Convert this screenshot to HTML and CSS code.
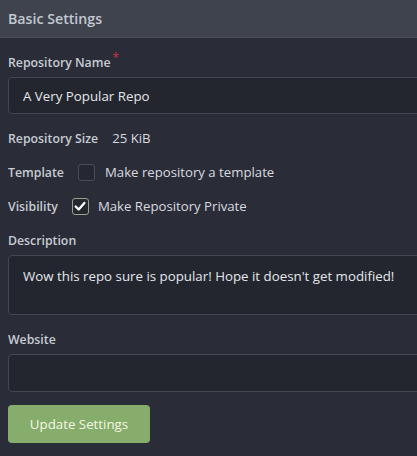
FILE: index.html
```html
<!DOCTYPE html>
<html>
<head>
<meta charset="utf-8">
<link rel="stylesheet" href="styles.css">
</head>
<body>
<div class="panel">
  <div class="panel-header">Basic Settings</div>
  <div class="panel-body">
    <div class="field">
      <label class="label">Repository Name<span class="req">*</span></label>
      <div class="input">A Very Popular Repo</div>
    </div>
    <div class="row size-row">
      <span class="label">Repository Size</span>
      <span class="value">25 KiB</span>
    </div>
    <div class="row">
      <span class="label">Template</span>
      <span class="check"></span>
      <span class="value">Make repository a template</span>
    </div>
    <div class="row">
      <span class="label">Visibility</span>
      <span class="check checked"><svg viewBox="0 0 16 16" width="14" height="14"><path d="M3 8.5 L6.5 12 L13 4.5" fill="none" stroke="#fff" stroke-width="2.6" stroke-linecap="round" stroke-linejoin="round"/></svg></span>
      <span class="value">Make Repository Private</span>
    </div>
    <div class="field desc-field">
      <label class="label">Description</label>
      <div class="input textarea">Wow this repo sure is popular! Hope it doesn't get modified!</div>
    </div>
    <div class="field web-field">
      <label class="label">Website</label>
      <div class="input empty"></div>
    </div>
    <button class="btn">Update Settings</button>
  </div>
</div>
</body>
</html>
```
FILE: styles.css
```css
html, body {
  margin: 0;
  padding: 0;
  background: #2a2d37;
  overflow: hidden;
}
body {
  font-family: "Open Sans", "Noto Sans", sans-serif;
  color: #d7dae0;
}
.panel {
  width: 440px;
}
.panel-header {
  background: #3f434e;
  border-bottom: 1px solid #4b4f5a;
  height: 38px;
  box-sizing: border-box;
  padding: 0 8px;
  display: flex;
  align-items: center;
  font-weight: 600;
  font-size: 14.2px;
  color: #c3c8d2;
}
.panel-body {
  padding: 16px 0 0 8px;
  display: flex;
  flex-direction: column;
}
.label {
  font-weight: 600;
  font-size: 12.3px;
  color: #c6cbd4;
}
.req {
  color: #b8323f;
  margin-left: 2px;
  font-size: 12px;
  position: relative;
  top: -5px;
}
.field {
  display: flex;
  flex-direction: column;
  gap: 6px;
  margin-bottom: 14px;
}
.desc-field {
  margin-top: 2px;
  margin-bottom: 16px;
}
.web-field {
  margin-bottom: 13px;
}
.input {
  background: #23262f;
  border: 1px solid #434750;
  border-radius: 4px;
  height: 37px;
  box-sizing: border-box;
  padding: 0 14px;
  display: flex;
  align-items: center;
  font-size: 13.3px;
  color: #e3e6eb;
}
.textarea {
  height: 60px;
  align-items: flex-start;
  padding-top: 11px;
}
.empty {
  height: 38px;
}
.row {
  display: flex;
  align-items: center;
  height: 20px;
  margin-bottom: 14px;
}
.size-row .label {
  margin-right: 14px;
}
.value {
  font-size: 13.2px;
  color: #d7dae0;
}
.row .check {
  width: 15px;
  height: 15px;
  border: 1px solid #4a4e58;
  border-radius: 3px;
  background: #252830;
  margin: 0 10px 0 14px;
  display: flex;
  align-items: center;
  justify-content: center;
}
.row .check.checked {
  border-color: #9aa08a;
  margin-left: 14px;
  margin-right: 9px;
}
.btn {
  align-self: flex-start;
  margin-top: 0;
  width: 142px;
  height: 38px;
  background: #86ad6b;
  border: none;
  border-radius: 4px;
  color: #f3f7e4;
  font-family: inherit;
  font-size: 13.3px;
}
```
